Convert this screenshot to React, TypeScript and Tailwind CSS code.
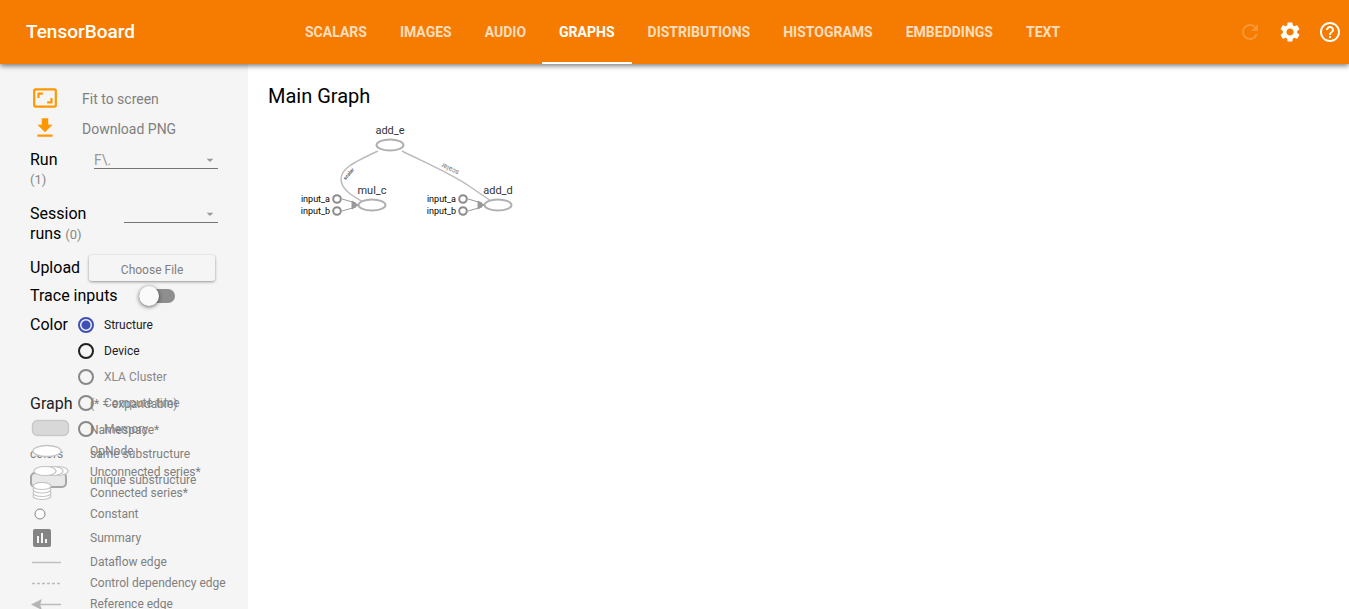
import React from "react";
import {
  MdArrowDropDown,
  MdAspectRatio,
  MdAssessment,
  MdFileDownload,
  MdHelpOutline,
  MdRefresh,
  MdSettings,
} from "react-icons/md";

const TABS = [
  "SCALARS",
  "IMAGES",
  "AUDIO",
  "GRAPHS",
  "DISTRIBUTIONS",
  "HISTOGRAMS",
  "EMBEDDINGS",
  "TEXT",
];

const Header: React.FC = () => {
  return (
    <header className="relative z-10 flex h-16 items-center bg-[#f57c00] text-white shadow-[0_2px_5px_rgba(0,0,0,0.5)]">
      <h1 className="w-[289px] shrink-0 pl-[26px] text-[19px] font-medium">
        TensorBoard
      </h1>
      <nav className="flex h-full flex-1">
        {TABS.map((tab) => (
          <a
            key={tab}
            href="#"
            className={
              tab === "GRAPHS"
                ? "-ml-px flex items-center border-y-2 border-t-transparent border-b-white px-[17px] text-sm font-bold"
                : "-ml-px flex items-center border-y-2 border-transparent px-[17px] text-sm font-bold text-white/75"
            }
          >
            {tab}
          </a>
        ))}
      </nav>
      <div className="-mr-px flex">
        <button
          aria-label="Reload"
          disabled
          className="flex size-10 items-center justify-center opacity-20"
        >
          <MdRefresh size={24} />
        </button>
        <button
          aria-label="Settings"
          className="flex size-10 items-center justify-center"
        >
          <MdSettings size={24} />
        </button>
        <button
          aria-label="Help"
          className="flex size-10 items-center justify-center"
        >
          <MdHelpOutline size={24} />
        </button>
      </div>
    </header>
  );
};

interface DropdownProps {
  id: string;
  value: string;
  className: string;
}

const Dropdown: React.FC<DropdownProps> = ({ id, value, className }) => {
  return (
    <div
      className={`relative h-[19px] border-b border-[#757575] text-[#999] ${className}`}
    >
      <select
        id={id}
        className="block h-[18px] w-full appearance-none bg-transparent pt-[2px] text-sm leading-4 outline-none"
      >
        <option>{value}</option>
      </select>
      <MdArrowDropDown
        size={16}
        className="pointer-events-none absolute right-0 top-[2px]"
      />
    </div>
  );
};

const COLORS = [
  { label: "Structure", enabled: true },
  { label: "Device", enabled: true },
  { label: "XLA Cluster", enabled: false },
  { label: "Compute time", enabled: false },
  { label: "Memory", enabled: false },
];

const ColorOptions: React.FC = () => {
  return (
    <fieldset className="flex pl-[30px]">
      <legend className="float-left w-12 leading-[26px]">Color</legend>
      <div>
        {COLORS.map(({ label, enabled }) => (
          <label
            key={label}
            className={
              enabled
                ? "flex h-[26px] items-center gap-[10px] text-xs text-[#212121]"
                : "flex h-[26px] items-center gap-[10px] text-xs text-[#888]"
            }
          >
            <input
              type="radio"
              name="color"
              defaultChecked={label === "Structure"}
              disabled={!enabled}
              className="size-4 appearance-none rounded-full border-2 border-current checked:border-[#3f51b5] checked:bg-[radial-gradient(#3f51b5_4px,transparent_5px)]"
            />
            {label}
          </label>
        ))}
      </div>
    </fieldset>
  );
};

const LEGEND = [
  {
    label: "Namespace*",
    icon: (
      <rect x="2.5" y="1.5" width="36" height="15" rx="5" fill="#d8d8d8" stroke="#c8c8c8" strokeWidth="1.4" />
    ),
  },
  {
    label: "OpNode",
    icon: (
      <ellipse cx="17" cy="11" rx="14" ry="5.5" fill="#fff" stroke="#c4c4c4" strokeWidth="1.4" />
    ),
  },
  {
    label: "Unconnected series*",
    icon: (
      <g fill="#fff" stroke="#c4c4c4" strokeWidth="1.2">
        <ellipse cx="27" cy="10" rx="11" ry="4.5" />
        <ellipse cx="22" cy="10" rx="11" ry="4.5" />
        <ellipse cx="15" cy="10" rx="11" ry="4.5" />
      </g>
    ),
  },
  {
    label: "Connected series*",
    icon: (
      <g fill="#fff" stroke="#c4c4c4" strokeWidth="1.2">
        <ellipse cx="12" cy="14" rx="9" ry="3.5" />
        <ellipse cx="12" cy="11" rx="9" ry="3.5" />
        <ellipse cx="12" cy="7.5" rx="9" ry="3.5" />
        <ellipse cx="12" cy="4" rx="9" ry="3.5" />
      </g>
    ),
  },
  {
    label: "Constant",
    icon: <circle cx="10" cy="11" r="5" fill="#fff" stroke="#848484" />,
  },
  { label: "Summary", icon: null },
  {
    label: "Dataflow edge",
    icon: <path d="M2 11.5h29" stroke="#c0c0c0" strokeWidth="1.5" />,
  },
  {
    label: "Control dependency edge",
    icon: (
      <path d="M2 11.5h29" stroke="#bbb" strokeWidth="1.5" strokeDasharray="3 2" />
    ),
  },
  {
    label: "Reference edge",
    icon: (
      <g>
        <path d="M10 11.5h21" stroke="#bbb" strokeWidth="1.5" />
        <path d="M1 11.5L12 6l-2 5.5 2 5.5z" fill="#b4b4b4" />
      </g>
    ),
  },
];

const Legend: React.FC = () => {
  return (
    <div className="absolute inset-x-0 top-[76px] pl-[30px] text-xs text-[#7f7f7f]">
      <div className="flex h-[31px] items-center">
        <h2 className="w-[60px] text-base text-[#222]">Graph</h2>
        <span>(* = expandable)</span>
      </div>
      <ul>
        {LEGEND.map(({ label, icon }) => (
          <li
            key={label}
            className={
              icon
                ? "flex h-[21px] items-center whitespace-nowrap"
                : "flex h-[27px] items-center whitespace-nowrap"
            }
          >
            <span className="w-[60px]">
              {icon ? (
                <svg width="42" height="21" fill="none">
                  {icon}
                </svg>
              ) : (
                <MdAssessment size={24} color="#848484" />
              )}
            </span>
            {label}
          </li>
        ))}
      </ul>
    </div>
  );
};

const Sidebar: React.FC = () => {
  return (
    <aside className="w-[248px] shrink-0 overflow-hidden bg-[#f5f5f5] pt-5 text-base text-black">
      <div className="flex flex-col items-start pl-8 text-sm text-[#7f7f7f]">
        <button className="flex h-[30px] items-center gap-6">
          <MdAspectRatio size={26} color="#ff9800" className="mb-[2px]" />
          Fit to screen
        </button>
        <button className="flex h-[30px] items-center gap-6">
          <MdFileDownload size={26} color="#ff9800" className="mb-[2px]" />
          Download PNG
        </button>
      </div>

      <div className="mt-[6px] flex justify-between px-[30px] leading-5">
        <label htmlFor="run" className="w-12">
          Run <span className="block text-[13px] text-[#888]">(1)</span>
        </label>
        <Dropdown id="run" value="F\." className="w-[124px]" />
      </div>

      <div className="mt-[14px] flex justify-between px-[30px] leading-5">
        <label htmlFor="session" className="w-16">
          Session runs <span className="text-[13px] text-[#888]">(0)</span>
        </label>
        <Dropdown id="session" value="" className="w-[94px]" />
      </div>

      <div className="mt-[10px] flex items-center gap-[9px] pl-[30px]">
        <span id="upload">Upload</span>
        <button
          aria-describedby="upload"
          className="h-[26px] w-[126px] rounded-[3px] pt-1 text-xs text-[#7f7f7f] shadow-[0_1px_3px_rgba(0,0,0,0.4)]"
        >
          Choose File
        </button>
      </div>

      <label className="mt-px flex h-7 items-center gap-[21px] pl-[30px]">
        Trace inputs
        <input type="checkbox" role="switch" className="peer sr-only" />
        <span className="flex h-[14px] w-9 items-center rounded-full bg-[#8e8e8e] peer-checked:justify-end">
          <span className="size-5 shrink-0 rounded-full bg-[#fafafa] shadow-[0_1px_4px_rgba(0,0,0,0.6)]" />
        </span>
      </label>

      <div className="relative mt-[2px]">
        <ColorOptions />
        <div className="mt-px grid grid-cols-[60px_1fr] pl-[30px] text-xs leading-[23px] text-[#7f7f7f]">
          <span>colors</span>
          <span>same substructure</span>
          <span className="mt-[6px] h-4 w-[37px] rounded-[5px] border-2 border-[#a6a6a6] bg-[#e8e8e8]" />
          <span className="mt-[3px]">unique substructure</span>
        </div>
        <Legend />
      </div>
    </aside>
  );
};

interface OpNodeProps {
  x: number;
  y: number;
  name: string;
}

const OpNode: React.FC<OpNodeProps> = ({ x, y, name }) => {
  return (
    <g>
      <ellipse cx={x} cy={y} rx="13.5" ry="5.5" fill="#fff" stroke="#b0b0b0" strokeWidth="2" />
      <text x={x} y={y - 11} textAnchor="middle" fontSize="11" fill="#333">
        {name}
      </text>
    </g>
  );
};

const Inputs: React.FC<{ x: number; y: number }> = ({ x, y }) => {
  return (
    <g>
      <path
        d={`M${x - 30} ${y - 6}l14 4M${x - 30} ${y + 6}l14 -4`}
        stroke="#999"
      />
      <path d={`M${x - 20} ${y - 4}l6 4l-6 4z`} fill="#999" stroke="#999" />
      <circle cx={x - 35} cy={y - 6} r="3.8" fill="#fff" stroke="#8c8c8c" strokeWidth="2" />
      <circle cx={x - 35} cy={y + 6} r="3.8" fill="#fff" stroke="#8c8c8c" strokeWidth="2" />
      <text x={x - 42} y={y - 3} textAnchor="end" fontSize="9" fill="#000">
        input_a
      </text>
      <text x={x - 42} y={y + 9} textAnchor="end" fontSize="9" fill="#000">
        input_b
      </text>
    </g>
  );
};

const Graph: React.FC = () => {
  return (
    <svg width="260" height="110" fill="none" className="mt-[7px]">
      <path d="M110 34C84 46 73 52 73 62C73 73 86 80 97 86" stroke="#bbb" strokeWidth="1.5" />
      <path d="M134 34C156 45 184 57 201 69L223 84" stroke="#bbb" strokeWidth="1.5" />
      <text transform="translate(82 58) rotate(-50)" fontSize="5" fontWeight="bold" fill="#555" textAnchor="middle">
        scalar
      </text>
      <text transform="translate(183 50) rotate(207)" fontSize="7" fill="#777" textAnchor="middle">
        scalar
      </text>
      <OpNode x={122} y={28} name="add_e" />
      <OpNode x={104} y={88} name="mul_c" />
      <OpNode x={230} y={88} name="add_d" />
      <Inputs x={104} y={88} />
      <Inputs x={230} y={88} />
    </svg>
  );
};

const App: React.FC = () => {
  return (
    <div className="flex h-screen flex-col overflow-hidden bg-white font-[Roboto,sans-serif]">
      <Header />
      <div className="flex min-h-0 flex-1">
        <Sidebar />
        <main className="flex-1 pl-5 pt-[18px] text-black">
          <h2 className="text-xl">Main Graph</h2>
          <Graph />
        </main>
      </div>
    </div>
  );
};

export default App;
